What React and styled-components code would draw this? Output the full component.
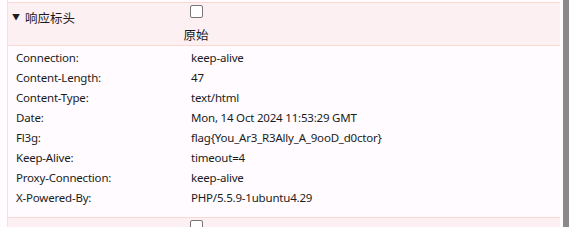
import React from "react";
import styled, { createGlobalStyle } from "styled-components";

const Global = createGlobalStyle`
  html, body { margin: 0; padding: 0; background: #fffbfe; overflow: hidden; }
  body { font-family: "Segoe UI", "Noto Sans", "Noto Sans CJK SC", sans-serif; font-size: 11.5px; letter-spacing: -0.2px; color: #1b1b1b; }
`;

const Page = styled.div`
  display: flex;
  width: 569px;
  height: 227px;
  overflow: hidden;
`;

const Main = styled.div`
  flex: 1;
  margin-left: 7px;
  border-left: 1px solid #f9dede;
  padding-top: 2px;
  padding-right: 3px;
  display: flex;
  flex-direction: column;
`;

const Scrollbar = styled.div`
  width: 6px;
  background: #8a8a8a;
`;

const SectionHeader = styled.div`
  display: grid;
  grid-template-columns: 175px 1fr;
  background: #fcf0f3;
  border-top: 1px solid #fcd8d3;
  border-bottom: 1px solid #fcd8d3;
  height: 42px;
  flex-shrink: 0;
`;

const Title = styled.div`
  display: flex;
  align-items: center;
  gap: 5px;
  padding-left: 4px;
  padding-top: ${(p) => (p.$clipped ? 10 : 0)}px;
  font-size: 12.5px;
  letter-spacing: 0;
  height: 28px;
`;

const Tri = styled.span`
  font-size: 8px;
  line-height: 1;
`;

const Toggle = styled.div`
  display: flex;
  flex-direction: column;
  align-items: center;
  width: 26px;
  padding-top: 2px;
`;

const Check = styled.span`
  width: 11px;
  height: 11px;
  border: 1px solid #767676;
  border-radius: 2px;
  background: #fff;
`;

const ToggleLabel = styled.span`
  margin-top: 7px;
  font-size: 12.5px;
  letter-spacing: 0;
`;

const Rows = styled.div`
  padding: 1px 0 10px;
`;

const Row = styled.div`
  display: grid;
  grid-template-columns: 183px 1fr;
  height: 20px;
  align-items: center;
  white-space: nowrap;
`;

const Name = styled.span`
  padding-left: 8px;
`;

const Value = styled.span``;

const headers = [
  ["Connection:", "keep-alive"],
  ["Content-Length:", "47"],
  ["Content-Type:", "text/html"],
  ["Date:", "Mon, 14 Oct 2024 11:53:29 GMT"],
  ["Fl3g:", "flag{You_Ar3_R3Ally_A_9ooD_d0ctor}"],
  ["Keep-Alive:", "timeout=4"],
  ["Proxy-Connection:", "keep-alive"],
  ["X-Powered-By:", "PHP/5.5.9-1ubuntu4.29"],
];

export default function App() {
  return (
    <Page>
      <Global />
      <Main>
        <SectionHeader>
          <Title>
            <Tri>▼</Tri>
            响应标头
          </Title>
          <Toggle>
            <Check />
            <ToggleLabel>原始</ToggleLabel>
          </Toggle>
        </SectionHeader>
        <Rows>
          {headers.map(([k, v]) => (
            <Row key={k}>
              <Name>{k}</Name>
              <Value>{v}</Value>
            </Row>
          ))}
        </Rows>
        <SectionHeader>
          <Title $clipped>
            <Tri>▼</Tri>
            请求标头
          </Title>
          <Toggle>
            <Check />
            <ToggleLabel>原始</ToggleLabel>
          </Toggle>
        </SectionHeader>
      </Main>
      <Scrollbar />
    </Page>
  );
}
